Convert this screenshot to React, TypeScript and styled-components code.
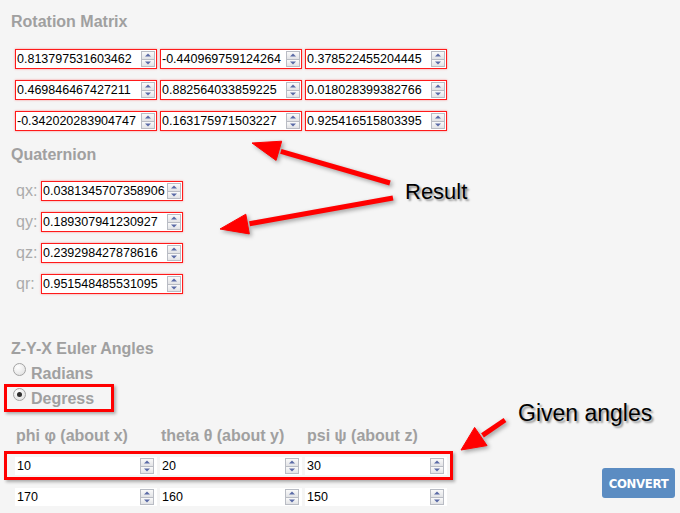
import styled, { createGlobalStyle } from "styled-components";

const GlobalStyle = createGlobalStyle`
  html, body {
    margin: 0;
    padding: 0;
    background: #f5f5f5;
  }
  body {
    font-family: "Liberation Sans", Arial, sans-serif;
  }
`;

const Page = styled.div`
  position: relative;
  width: 680px;
  height: 513px;
  box-sizing: border-box;
  padding: 12px 5px 0 11px;
  overflow: hidden;
`;

const SectionTitle = styled.h2<{ $mt?: number }>`
  margin: ${({ $mt }) => $mt ?? 0}px 0 0 0;
  font-size: 16px;
  line-height: 20px;
  font-weight: bold;
  color: #a0a0a0;
`;

const MatrixGrid = styled.div`
  display: grid;
  grid-template-columns: repeat(3, 142px);
  column-gap: 3px;
  row-gap: 11px;
  margin: 17px 0 0 4px;
`;

const Field = styled.div<{ $variant: "result" | "plain" }>`
  display: flex;
  align-items: center;
  box-sizing: border-box;
  width: 142px;
  height: ${({ $variant }) => ($variant === "result" ? 20 : 18)}px;
  background: #fff;
  border: ${({ $variant }) => ($variant === "result" ? "1px solid #ff1a1a" : "none")};
  box-shadow: ${({ $variant }) =>
    $variant === "result" ? "0 0 2px rgba(255, 60, 60, 0.55)" : "none"};
  padding: ${({ $variant }) => ($variant === "result" ? "0 1px 0 1px" : "0 3px 0 2px")};
`;

const FieldInput = styled.input`
  flex: 1;
  min-width: 0;
  border: none;
  outline: none;
  background: transparent;
  padding: 0;
  font-family: "Liberation Sans", Arial, sans-serif;
  font-size: 12.5px;
  color: #000;
`;

const Spinner = styled.div`
  display: flex;
  flex-direction: column;
  width: 14px;
  height: 16px;
  flex-shrink: 0;
`;

const SpinHalf = styled.span<{ $dir: "up" | "down" }>`
  position: relative;
  flex: 1;
  box-sizing: border-box;
  border: 1px solid #b9bcc4;
  border-top-width: ${({ $dir }) => ($dir === "down" ? 0 : 1)}px;
  background: linear-gradient(#fafafa, #e2e3e6);

  &::after {
    content: "";
    position: absolute;
    left: 50%;
    top: 50%;
    transform: translate(-50%, -50%);
    border-left: 3px solid transparent;
    border-right: 3px solid transparent;
    ${({ $dir }) =>
      $dir === "up"
        ? "border-bottom: 3px solid #5a6aa6;"
        : "border-top: 3px solid #5a6aa6;"}
  }
`;

const QuatList = styled.div`
  display: flex;
  flex-direction: column;
  gap: 11px;
  margin: 16px 0 0 5px;
`;

const QuatRow = styled.div`
  display: flex;
  align-items: center;
`;

const QuatLabel = styled.span`
  width: 25px;
  font-size: 16px;
  color: #ababab;
`;

const RadioGroup = styled.div`
  display: flex;
  flex-direction: column;
  margin: 5px 0 0 2px;
`;

const RadioRow = styled.label`
  position: relative;
  display: flex;
  align-items: flex-start;
  gap: 5px;
  height: 25px;
  font-size: 16px;
  line-height: 20px;
  font-weight: bold;
  color: #a0a0a0;
`;

const RadioDot = styled.span<{ $checked?: boolean }>`
  position: relative;
  width: 13px;
  height: 13px;
  margin-top: -1px;
  box-sizing: border-box;
  border-radius: 50%;
  border: 1px solid #a4a4a4;
  background: radial-gradient(circle at 35% 30%, #ffffff, #dcdcdc);

  &::after {
    content: "";
    display: ${({ $checked }) => ($checked ? "block" : "none")};
    position: absolute;
    left: 3px;
    top: 3px;
    width: 5px;
    height: 5px;
    border-radius: 50%;
    background: #2f2f2f;
  }
`;

const Highlight = styled.span<{ $l: number; $t: number; $w: number; $h: number }>`
  position: absolute;
  left: ${({ $l }) => $l}px;
  top: ${({ $t }) => $t}px;
  width: ${({ $w }) => $w}px;
  height: ${({ $h }) => $h}px;
  box-sizing: border-box;
  border: 3px solid #ff0000;
  box-shadow: 2px 2px 3px rgba(0, 0, 0, 0.3);
  pointer-events: none;
`;

const AngleLabels = styled.div`
  display: grid;
  grid-template-columns: 145px 146px 145px;
  margin: 12px 0 0 5px;
  font-size: 16px;
  line-height: 20px;
  font-weight: bold;
  color: #a0a0a0;
`;

const EulerFooter = styled.div`
  display: flex;
  justify-content: space-between;
  align-items: flex-end;
  margin-top: 11px;
`;

const AngleGrid = styled.div`
  display: flex;
  flex-direction: column;
  gap: 13px;
  margin-left: 4px;
`;

const AngleRow = styled.div`
  position: relative;
  display: grid;
  grid-template-columns: repeat(3, 142px);
  column-gap: 3px;
`;

const ConvertButton = styled.button`
  width: 73px;
  height: 30px;
  margin-bottom: 8px;
  padding: 0;
  border: none;
  border-radius: 3px;
  background: #5b8cc2;
  color: #fff;
  font-family: "DejaVu Sans Condensed", "DejaVu Sans", sans-serif;
  font-stretch: condensed;
  font-weight: bold;
  font-size: 13px;
  letter-spacing: -0.3px;
  cursor: pointer;
`;

const Overlay = styled.svg`
  position: absolute;
  left: 0;
  top: 0;
  width: 680px;
  height: 513px;
  pointer-events: none;
  filter: drop-shadow(2px 2px 2px rgba(0, 0, 0, 0.35));
`;

const Note = styled.span<{ $x: number; $y: number; $size: number }>`
  position: absolute;
  left: ${({ $x }) => $x}px;
  top: ${({ $y }) => $y}px;
  font-family: "Liberation Sans", Arial, sans-serif;
  font-size: ${({ $size }) => $size}px;
  line-height: 1;
  color: #000;
  text-shadow: 2px 2px 2px rgba(0, 0, 0, 0.4);
  white-space: nowrap;
`;

const NumberField = ({ value, variant }: { value: string; variant: "result" | "plain" }) => (
  <Field $variant={variant}>
    <FieldInput type="text" defaultValue={value} />
    <Spinner>
      <SpinHalf $dir="up" />
      <SpinHalf $dir="down" />
    </Spinner>
  </Field>
);

type Pt = [number, number];

const Arrow = ({ tail, tip, len, half }: { tail: Pt; tip: Pt; len: number; half: number }) => {
  const dx = tail[0] - tip[0];
  const dy = tail[1] - tip[1];
  const d = Math.hypot(dx, dy);
  const ux = dx / d;
  const uy = dy / d;
  const bx = tip[0] + ux * len;
  const by = tip[1] + uy * len;
  const c1 = `${bx - uy * half},${by + ux * half}`;
  const c2 = `${bx + uy * half},${by - ux * half}`;
  return (
    <g fill="#ff0000" stroke="#ff0000">
      <line x1={tail[0]} y1={tail[1]} x2={bx + ux * 2} y2={by + uy * 2} strokeWidth={5} />
      <polygon points={`${tip[0]},${tip[1]} ${c1} ${c2}`} strokeWidth={1} />
    </g>
  );
};

const matrix = [
  "0.813797531603462",
  "-0.440969759124264",
  "0.378522455204445",
  "0.469846467427211",
  "0.882564033859225",
  "0.018028399382766",
  "-0.342020283904747",
  "0.163175971503227",
  "0.925416515803395",
];

const quaternion = [
  ["qx:", "0.0381345707358906"],
  ["qy:", "0.189307941230927"],
  ["qz:", "0.239298427878616"],
  ["qr:", "0.951548485531095"],
];

const angleRows = [
  ["10", "20", "30"],
  ["170", "160", "150"],
];

export default function App() {
  return (
    <>
      <GlobalStyle />
      <Page>
        <SectionTitle>Rotation Matrix</SectionTitle>
        <MatrixGrid>
          {matrix.map((v, i) => (
            <NumberField key={i} value={v} variant="result" />
          ))}
        </MatrixGrid>

        <SectionTitle $mt={14}>Quaternion</SectionTitle>
        <QuatList>
          {quaternion.map(([label, v]) => (
            <QuatRow key={label}>
              <QuatLabel>{label}</QuatLabel>
              <NumberField value={v} variant="result" />
            </QuatRow>
          ))}
        </QuatList>

        <SectionTitle $mt={45}>Z-Y-X Euler Angles</SectionTitle>
        <RadioGroup>
          <RadioRow>
            <RadioDot />
            Radians
          </RadioRow>
          <RadioRow>
            <RadioDot $checked />
            Degress
            <Highlight $l={-9} $t={-5} $w={110} $h={28} />
          </RadioRow>
        </RadioGroup>

        <AngleLabels>
          <span>phi φ (about x)</span>
          <span>theta θ (about y)</span>
          <span>psi ψ (about z)</span>
        </AngleLabels>
        <EulerFooter>
          <AngleGrid>
            {angleRows.map((row, r) => (
              <AngleRow key={r}>
                {row.map((v) => (
                  <NumberField key={v} value={v} variant="plain" />
                ))}
                {r === 0 && <Highlight $l={-11} $t={-6} $w={449} $h={29} />}
              </AngleRow>
            ))}
          </AngleGrid>
          <ConvertButton>CONVERT</ConvertButton>
        </EulerFooter>

        <Overlay viewBox="0 0 680 513">
          <Arrow tail={[390, 183]} tip={[252, 143]} len={28} half={10} />
          <Arrow tail={[393, 198]} tip={[220, 229]} len={28} half={10} />
          <Arrow tail={[505, 420]} tip={[461, 450]} len={24} half={11} />
        </Overlay>
        <Note $x={405} $y={181} $size={22}>
          Result
        </Note>
        <Note $x={518} $y={402} $size={23}>
          Given angles
        </Note>
      </Page>
    </>
  );
}
